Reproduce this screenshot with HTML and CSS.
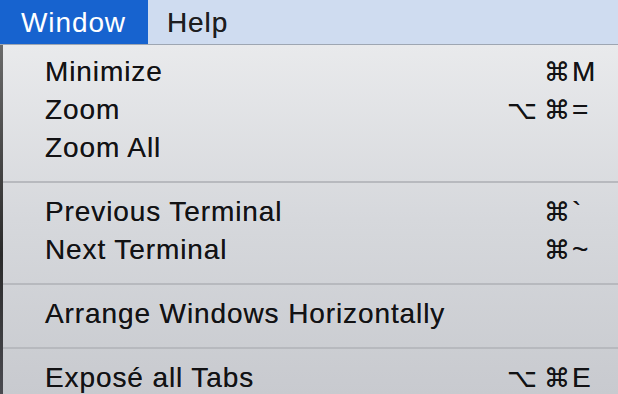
FILE: index.html
```html
<!DOCTYPE html>
<html>
<head>
  <meta charset="UTF-8">
  <title>Window Menu</title>
  <link rel="stylesheet" href="styles.css">
</head>
<body>
  <div class="menubar">
    <span class="menubar-item open">Window</span>
    <span class="menubar-item">Help</span>
  </div>

  <div class="menu-wrap">
    <div class="desktop-edge"></div>
    <div class="menu">
      <div class="menu-item"><span class="label">Minimize</span><span class="shortcut"><span class="mods">⌘</span><span class="key">M</span></span></div>
      <div class="menu-item"><span class="label">Zoom</span><span class="shortcut"><span class="mods"><span class="opt">⌥</span>⌘</span><span class="key">=</span></span></div>
      <div class="menu-item"><span class="label">Zoom All</span></div>
      <div class="separator"></div>
      <div class="menu-item"><span class="label">Previous Terminal</span><span class="shortcut"><span class="mods">⌘</span><span class="key">`</span></span></div>
      <div class="menu-item"><span class="label">Next Terminal</span><span class="shortcut"><span class="mods">⌘</span><span class="key">~</span></span></div>
      <div class="separator"></div>
      <div class="menu-item"><span class="label">Arrange Windows Horizontally</span></div>
      <div class="separator"></div>
      <div class="menu-item"><span class="label">Exposé all Tabs</span><span class="shortcut"><span class="mods"><span class="opt">⌥</span>⌘</span><span class="key">E</span></span></div>
    </div>
  </div>
</body>
</html>
```

FILE: styles.css
```css
body {
  margin: 0;
  width: 618px;
  height: 394px;
  overflow: hidden;
  font-family: "Liberation Sans", Arial, "DejaVu Sans", sans-serif;
  font-size: 28px;
  letter-spacing: 0.9px;
  color: #121214;
  text-shadow: 0 0 0.6px rgba(0, 0, 0, 0.6);
  background-color: #c9cbd0;
}
/* Top menu bar */
.menubar {
  display: flex;
  height: 44px;
  background-color: #cfdcf0;
  border-bottom: 1px solid #9ea6b2;
}
.menubar-item {
  line-height: 46px;
  padding: 0 19px;
  color: #1d1d1f;
}
.menubar-item.open {
  background-color: #1763cf;
  color: white;
  text-shadow: none;
  padding: 0 20px 0 21px;
  width: 107px;
}
/* Dropdown */
.menu-wrap {
  display: flex;
  height: 349px;
}
.desktop-edge {
  width: 3px;
  background: linear-gradient(#6a6a6a, #2a2a2a 60%, #4a4a50);
}
.menu {
  flex: 1;
  padding-top: 8px;
  background: linear-gradient(#e9eaec, #d6d8dc 50%, #c8cacf);
}
.menu-item {
  display: flex;
  align-items: center;
  justify-content: space-between;
  height: 38px;
  line-height: 38px;
  padding: 0 18px 0 42px;
  white-space: nowrap;
}
.shortcut {
  display: flex;
  font-family: "DejaVu Sans", "Liberation Sans", sans-serif;
  font-size: 26px;
  letter-spacing: 0;
}
.mods {
  width: 80px;
  text-align: right;
}
.opt {
  margin-right: 7px;
}
.key {
  width: 28px;
  padding-left: 2px;
  text-align: left;
  font-family: "Liberation Sans", Arial, sans-serif;
  font-size: 28px;
}
.separator {
  height: 2px;
  margin: 14px 0 10px;
  background-color: #b7b9be;
}
```
